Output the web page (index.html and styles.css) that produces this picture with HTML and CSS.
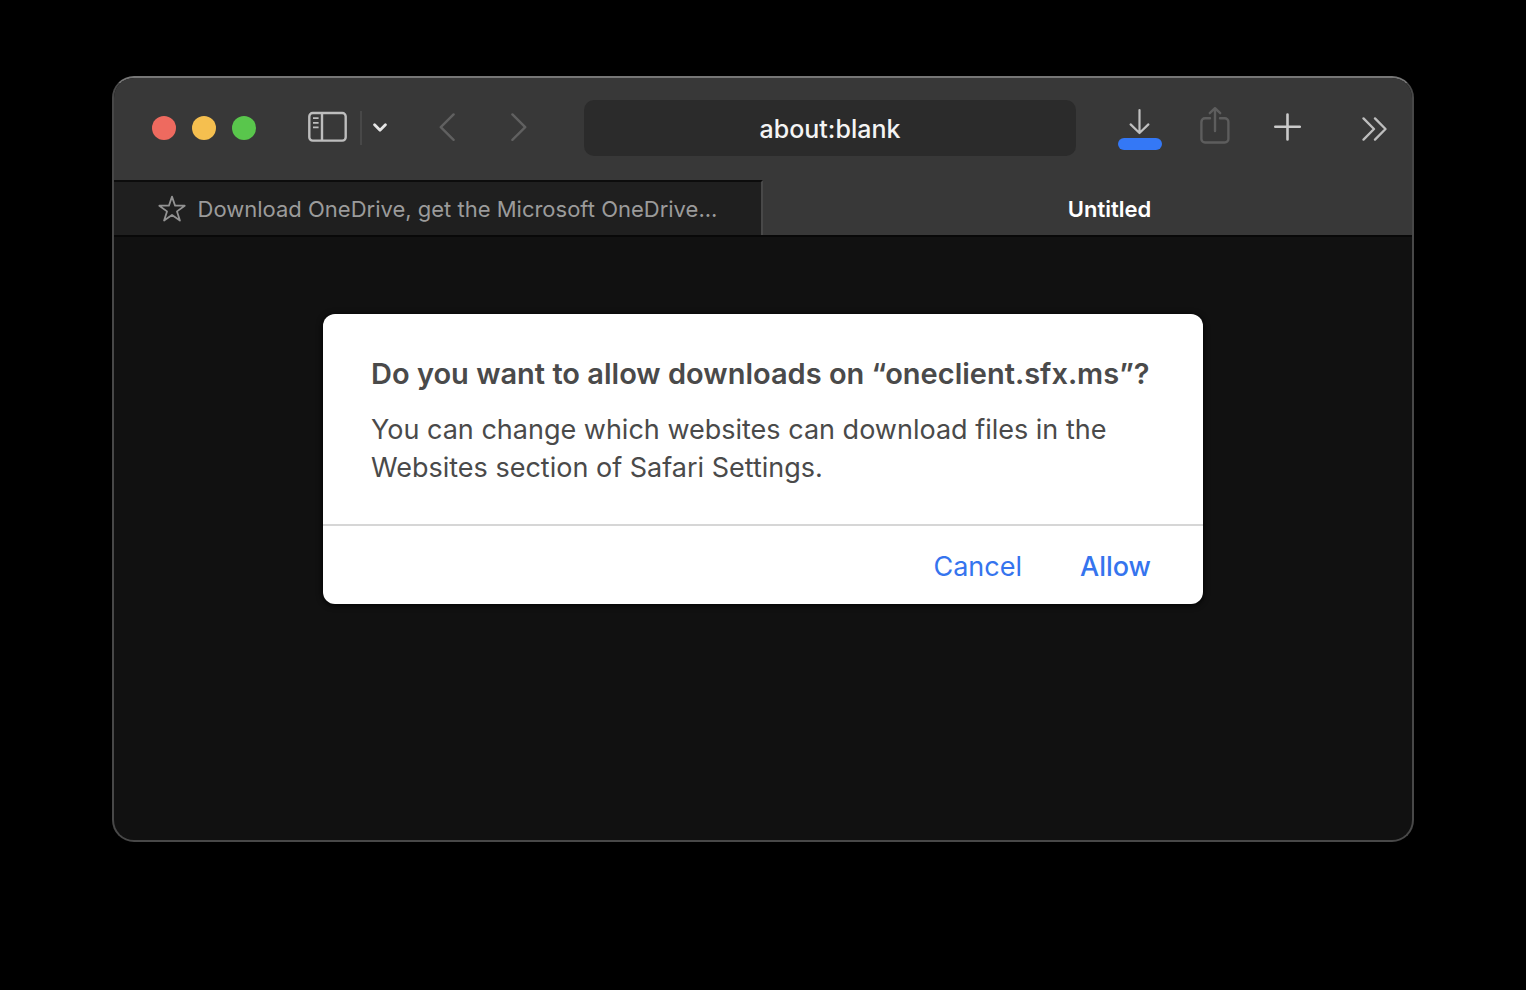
FILE: index.html
```
<!DOCTYPE html>
<html lang="en">
<head>
<meta charset="utf-8">
<title>Untitled</title>
<link rel="stylesheet" href="styles.css">
</head>
<body>
<main class="window">
  <header class="toolbar">
    <div class="lights">
      <button class="light close" aria-label="Close"></button>
      <button class="light minimize" aria-label="Minimize"></button>
      <button class="light zoom" aria-label="Zoom"></button>
    </div>
    <div class="sidebar-group">
      <button class="tool" aria-label="Show sidebar">
        <svg width="39" height="44" viewBox="0 0 39 44" fill="none" stroke="#bdbdbd" stroke-width="2.4">
          <rect x="1.3" y="7" width="36.4" height="27.6" rx="3.4"/>
          <path d="M14 7v27.600"/>
          <path d="M5 12.200h5.600M5 16.800h5.600M5 21.400h5.600" stroke-width="1.8"/>
        </svg>
      </button>
      <span class="divider"></span>
      <button class="tool" aria-label="Tab groups">
        <svg width="14" height="44" viewBox="0 0 14 44" fill="none" stroke="#e6e6e6" stroke-width="2.8" stroke-linecap="round" stroke-linejoin="round"><path d="M1.6 18.8L7 24.2l5.4-5.4"/></svg>
      </button>
    </div>
    <div class="history">
      <button class="tool" aria-label="Back">
        <svg width="16" height="44" viewBox="0 0 16 44" fill="none" stroke="#606060" stroke-width="2.4" stroke-linecap="round" stroke-linejoin="round"><path d="M14.6 8.4L1.8 21.2l12.8 12.6"/></svg>
      </button>
      <button class="tool" aria-label="Forward">
        <svg width="16" height="44" viewBox="0 0 16 44" fill="none" stroke="#606060" stroke-width="2.4" stroke-linecap="round" stroke-linejoin="round"><path d="M1.4 8.4l12.8 12.8L1.4 33.8"/></svg>
      </button>
    </div>
    <input class="address" type="text" value="about:blank" aria-label="Address">
    <button class="tool" aria-label="Downloads">
      <svg width="44" height="46" viewBox="0 0 44 46" fill="none">
        <path d="M21.5 5v22.600M12.600 19.400l8.900 8.600 8.900-8.600" stroke="#c0c0c0" stroke-width="2.2" stroke-linecap="round" stroke-linejoin="round"/>
        <rect x="0" y="33" width="44" height="12" rx="6" fill="#3478f6"/>
      </svg>
    </button>
    <button class="tool share" aria-label="Share">
      <svg width="30" height="44" viewBox="0 0 30 44" fill="none" stroke="#5d5d5d" stroke-width="2.4" stroke-linecap="round" stroke-linejoin="round"><path d="M10 12.300H5a3.600 3.600 0 0 0-3.600 3.600v17A3.600 3.600 0 0 0 5 36.500h19.800a3.600 3.600 0 0 0 3.600-3.600v-17a3.600 3.600 0 0 0-3.600-3.600H20M15 25V2.400M9.800 7.200L15 2.200l5.200 5"/></svg>
    </button>
    <button class="tool add" aria-label="New tab">
      <svg width="27" height="44" viewBox="0 0 27 44" fill="none" stroke="#cacaca" stroke-width="2.6" stroke-linecap="round"><path d="M13.500 8.600v24.800M1.300 20.800h24.600"/></svg>
    </button>
    <button class="tool more" aria-label="More">
      <svg width="25" height="44" viewBox="0 0 25 44" fill="none" stroke="#bdbdbd" stroke-width="2.300" stroke-linecap="round" stroke-linejoin="round"><path d="M1.500 12.400L12 23 1.500 33.600M13 12.400L23.500 23 13 33.600"/></svg>
    </button>
  </header>
  <nav class="tabs">
    <button class="tab background">
      <svg width="28" height="28" viewBox="0 0 28 28" fill="none" stroke="#929292" stroke-width="1.800" stroke-linejoin="round"><path d="M14 1.600l3.100 9.100h9.600l-7.700 5.700 2.900 9.200-7.900-5.600-7.900 5.600L9 16.400l-7.700-5.700h9.600z"/></svg>
      <span>Download OneDrive, get the Microsoft OneDrive...</span>
    </button>
    <button class="tab current"><span>Untitled</span></button>
  </nav>
  <div class="page">
    <section class="dialog" role="dialog" aria-labelledby="dialog-title">
      <div class="message">
        <h1 id="dialog-title">Do you want to allow downloads on “oneclient.sfx.ms”?</h1>
        <p>You can change which websites can download files in the Websites section of Safari Settings.</p>
      </div>
      <div class="actions">
        <button class="action">Cancel</button>
        <button class="action allow">Allow</button>
      </div>
    </section>
  </div>
</main>
</body>
</html>
```

FILE: styles.css
```
* { box-sizing: border-box; }

body {
  margin: 0;
  min-height: 100vh;
  padding: 76px 112px 148px;
  display: flex;
  background: #000;
  font-family: Inter, "Liberation Sans", sans-serif;
}

button {
  margin: 0;
  padding: 0;
  border: 0;
  background: none;
  font: inherit;
  color: inherit;
}

svg { display: block; flex: none; }

.window {
  flex: 1;
  display: flex;
  flex-direction: column;
  overflow: hidden;
  border: 2px solid #484848;
  border-top-color: #767676;
  border-radius: 22px;
  background: #111;
}

.toolbar {
  height: 102px;
  padding: 0 25px 2px 38px;
  display: flex;
  align-items: center;
  background: #383838;
}

.lights { display: flex; gap: 16px; }
.light { width: 24px; height: 24px; border-radius: 50%; }
.close { background: #ee6a5f; }
.minimize { background: #f5bf4f; }
.zoom { background: #59c64c; }

.sidebar-group { display: flex; align-items: center; margin-left: 52px; }
.divider { width: 2px; height: 34px; margin: 0 11px 0 13px; background: #484848; }

.history { display: flex; gap: 56px; margin-left: 52px; }

.address {
  flex: 1;
  min-width: 0;
  height: 56px;
  margin: 0 42px 0 57px;
  padding: 2px 12px 0;
  border: 0;
  border-radius: 10px;
  background: #2b2b2b;
  color: #f4f4f4;
  font: 500 25px Inter, "Liberation Sans", sans-serif;
  text-align: center;
}

.share { margin-left: 38px; }
.add { margin-left: 44px; }
.more { margin-left: 61px; }

.tabs {
  display: grid;
  grid-template-columns: 1fr 1fr;
  height: 57px;
  border-bottom: 2px solid #080808;
  background: #383838;
}

.tab {
  min-width: 0;
  display: flex;
  align-items: center;
  justify-content: center;
  gap: 12px;
  font-size: 22px;
  white-space: nowrap;
}

.background {
  border-top: 2px solid #0c0c0c;
  border-right: 2px solid #484848;
  background: #1f1f1f;
  color: #9b9b9b;
}

.current { padding: 2px 0 0 44px; color: #fff; font-weight: 600; }

.page { flex: 1; padding: 77px 24px 24px; }

.dialog {
  max-width: 880px;
  margin: 0 auto;
  border-radius: 12px;
  background: #fff;
  color: #4a4a4a;
  box-shadow: 0 1px 6px #000;
}

.message { padding: 41px 48px 37px; border-bottom: 2px solid #d6d6d6; }

h1 { margin: 0 0 18px; font-size: 29px; line-height: 38px; font-weight: 600; }
p { margin: 0; font-size: 27px; line-height: 38px; }

.actions {
  height: 78px;
  padding: 2px 52px 0 48px;
  display: flex;
  align-items: center;
  justify-content: flex-end;
  gap: 58px;
  color: #3574ee;
  font-size: 27px;
}

.allow { font-weight: 500; }
```
